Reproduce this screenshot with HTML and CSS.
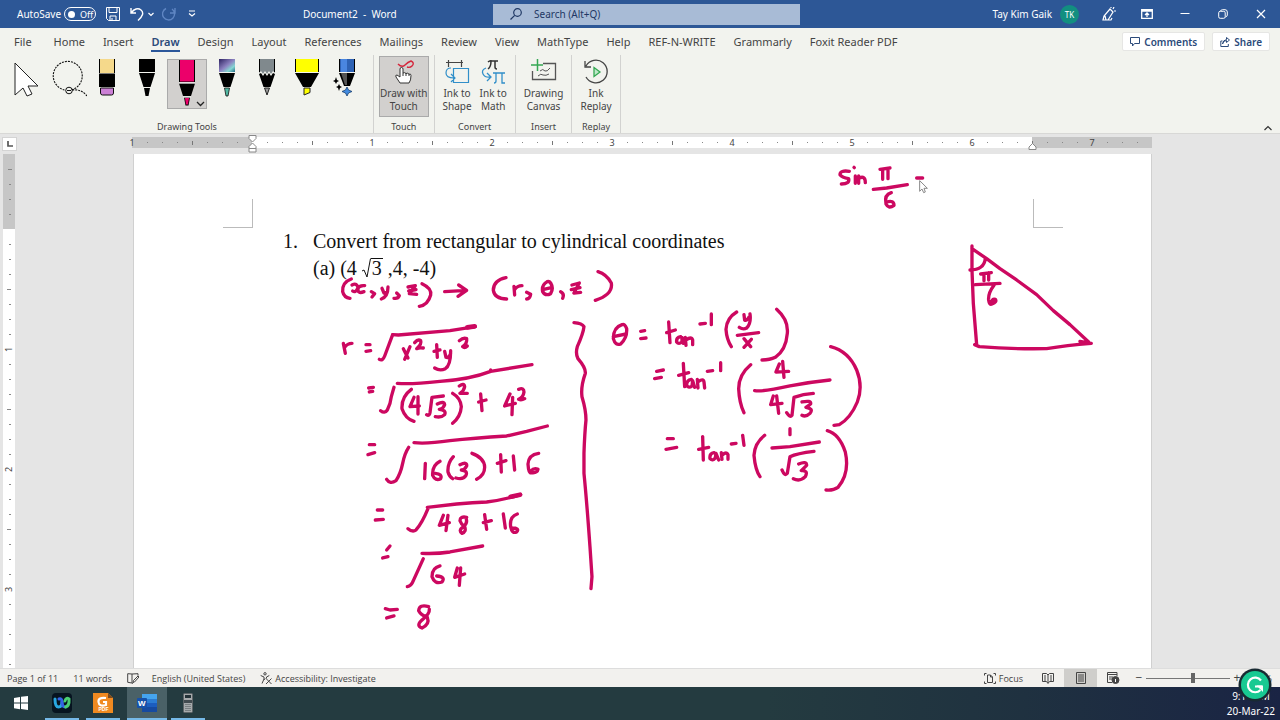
FILE: index.html
```html
<!DOCTYPE html>
<html lang="en">
<head>
<meta charset="utf-8">
<title>Document2 - Word</title>
<link rel="stylesheet" href="styles.css">
</head>
<body>
<div class="app">
  <header class="titlebar">
    <div class="quick">
      <label class="autosave" for="autosave">AutoSave</label>
      <span class="toggle"><input type="checkbox" id="autosave"><i></i><span>Off</span></span>
      <button class="tb save" aria-label="Save"><svg width="14" height="14" viewBox="0 0 14 14"><path d="M.5.5h13v13H2.500L.5 11.500zM3 .5v5h8v-5M4 13.500v-4.500h6v4.500M6 11v2"/></svg></button>
      <button class="tb undo" aria-label="Undo"><svg width="14" height="14" viewBox="0 0 14 14"><path d="M1 1v5h5M1.500 5.500C4 2 8 .5 11 3s2 6-3 10.500" stroke-width="1.400"/></svg></button>
      <button class="tb drop" aria-label="Undo list"><svg width="6" height="5" viewBox="0 0 6 5"><path d="M.5 1L3 3.500 5.500 1" stroke-width="1.200"/></svg></button>
      <button class="tb redo" aria-label="Redo"><svg width="14" height="14" viewBox="0 0 14 14"><path d="M13 1v5H8M10 2a6 6 0 1 1-6-.5" stroke="#5f86c3" stroke-width="1.400"/></svg></button>
      <button class="tb more" aria-label="Customize toolbar"><svg width="8" height="8" viewBox="0 0 8 8"><path d="M1 1h6M1 3.500L4 6l3-2.500" stroke-width="1.200"/></svg></button>
    </div>
    <div class="doc-title">Document2&nbsp; - &nbsp;Word</div>
    <div class="search">
      <svg width="12" height="12" viewBox="0 0 12 12"><circle cx="7.500" cy="4.500" r="3.800"/><path d="M4.700 7.300L.5 11.500"/></svg>
      <input type="text" aria-label="Search" placeholder="Search (Alt+Q)">
    </div>
    <div class="account"><span>Tay Kim Gaik</span><span class="avatar">TK</span></div>
    <div class="window-buttons">
      <button class="tb" aria-label="Coming soon"><svg width="14" height="14" viewBox="0 0 14 14"><path d="M1 13L2 9l6-7 3 3-5 8zM4 13l-1-4M8 2l3 3M9 1V0M11 2l1-2M12 4h2M6 13h3l1-2" stroke-width="1.200"/></svg></button>
      <button class="tb" aria-label="Ribbon display options"><svg width="12" height="10" viewBox="0 0 12 10"><path d="M.7.7h10.600v8.600H.7zM.7 2h10.600M6 8V4M4 6l2-2 2 2" stroke-width="1.300"/></svg></button>
      <button class="tb" aria-label="Minimize"><svg width="10" height="10" viewBox="0 0 10 10"><path d="M.5 4.500h9"/></svg></button>
      <button class="tb" aria-label="Restore"><svg width="10" height="10" viewBox="0 0 10 10"><rect x=".7" y="2.300" width="6.500" height="7" rx="1.500"/><path d="M2.500 2Q3 .7 4.500.7h2.500Q9.300.7 9.300 3v3Q9.300 7.500 7.500 8"/></svg></button>
      <button class="tb" aria-label="Close"><svg width="10" height="10" viewBox="0 0 10 10"><path d="M1 1l8 8M9 1L1 9" stroke-width="1.200"/></svg></button>
    </div>
  </header>

  <div class="tabrow">
    <nav class="tabs">
      <a href="#" class="file">File</a><a href="#">Home</a><a href="#">Insert</a><a href="#" class="current">Draw</a><a href="#">Design</a><a href="#">Layout</a><a href="#">References</a><a href="#">Mailings</a><a href="#">Review</a><a href="#">View</a><a href="#">MathType</a><a href="#">Help</a><a href="#">REF-N-WRITE</a><a href="#">Grammarly</a><a href="#">Foxit Reader PDF</a>
    </nav>
    <div class="tab-actions">
      <button><svg width="10" height="10" viewBox="0 0 10 10"><path d="M.5.5h9v6h-5L2.500 9V6.500h-2z"/></svg>Comments</button>
      <button><svg width="10" height="10" viewBox="0 0 10 10"><path d="M2.500 4H.8v5.500h7.500V7M2.500 7Q3 3.500 6.500 3.500V5.500L9.500 3 6.500.5v2Q3 3 2.500 7"/></svg>Share</button>
    </div>
  </div>

  <section class="ribbon">
    <div class="group tools">
      <div class="items">
        <button class="tool" aria-label="Select"><svg viewBox="0 0 40 50"><path d="M8 4v32l8-7 4 8 5-2-4-8h10z" fill="#fff" stroke="#222"/></svg></button>
        <button class="tool" aria-label="Lasso select"><svg viewBox="0 0 40 50"><path d="M17.500 31A14.500 14.500 0 1 1 24 31M25 31q10-1 15 6" fill="none" stroke="#111" stroke-width="1.100" stroke-dasharray="2 1"/><circle cx="22" cy="31.500" r="3.300" fill="none" stroke="#111"/><path d="M20 31.500h4" stroke="#111"/></svg></button>
        <button class="tool" aria-label="Eraser"><svg viewBox="0 0 40 50"><path d="M12.500 0h15v14h-15z" fill="#f5d98b"/><path d="M12 14.500h16V28H12zM12 0h1v14h-1zM27 0h1v14h-1z"/><path d="M13.500 29h13v5q0 2-2 2h-9q-2 0-2-2z" fill="#cc80d6" stroke="#111"/></svg></button>
        <button class="tool" aria-label="Black pen"><svg viewBox="0 0 40 50"><path d="M12 0h16v13H12zM12 14h16l-4.500 14h-7zM17 29h6l-1.500 8h-3z"/></svg></button>
        <button class="tool selected" aria-label="Pink pen"><svg viewBox="0 0 40 50"><path d="M12 0h16v23H12zM12 24.500h16L24 37h-8zM17 38.500h6l-1.500 8h-3z"/><path d="M13 0h14v22.500H13zM18 39h4l-1 6.500h-2z" fill="#ec006a"/><path d="M12 24h16M16 38h8" stroke="#fff" stroke-width=".7"/><path d="M30 43l3.500 3.500L37 43" fill="none" stroke="#222" stroke-width="1.300"/></svg></button>
        <button class="tool" aria-label="Galaxy pen"><svg viewBox="0 0 40 50"><defs><linearGradient id="galaxy" x2="1" y2="1"><stop stop-color="#2d2261"/><stop offset=".5" stop-color="#8d83c1"/><stop offset=".75" stop-color="#86d8d2"/><stop offset="1" stop-color="#246c87"/></linearGradient></defs><path d="M12 0h16v13H12z" fill="url(#galaxy)"/><path d="M12 14h16l-4.500 14h-7z"/><path d="M17.500 29h5l-1.500 8h-2z" fill="#52b9a3" stroke="#111" stroke-width=".8"/></svg></button>
        <button class="tool" aria-label="Pencil"><svg viewBox="0 0 40 50"><path d="M12 0h16v14l-2-2-2 3-2-3-2 3-2-3-2 3-2-3-2 2z" fill="#80898d"/><path d="M12 15l2-1 2 3 2-3 2 3 2-3 2 3 2-3 2 1-4.500 13h-7zM12 0h1v13h-1zM27 0h1v13h-1z"/><path d="M17.500 29h5L20 36z" fill="#999" stroke="#222"/></svg></button>
        <button class="tool" aria-label="Highlighter"><svg viewBox="0 0 40 50"><path d="M8 0h24v13H8z" fill="#ff0"/><path d="M8 0h1v13H8zM31 0h1v13h-1zM8 14h24l-8 14h-8z"/><path d="M17 29h6v4.500L17 36z" fill="#ff0" stroke="#222"/></svg></button>
        <button class="tool" aria-label="Action pen"><svg viewBox="0 0 40 50"><path d="M12 0h16v13H12z" fill="#2e62b4"/><path d="M14 0h6v13h-6z" fill="#4a86e0"/><path d="M12 0h1v13h-1zM27 0h1v13h-1zM12 14h16l-5 13h-6zM9 18l1 3 2 1-2 1-1 2-1-2-2-1 2-1zM12 25l1 2 2 1-2 1-1 3-1-3-2-1 2-1z"/><path d="M14 14h6v12h-2z" fill="#555"/><path d="M20 28l1.500 3L25 32.500 21.500 34 20 37l-1.500-3-3.500-1.500 3.500-1.500z" fill="#428be0" stroke="#173d70" stroke-width=".8"/></svg></button>
      </div>
      <div class="caption">Drawing Tools</div>
    </div>
    <div class="group touch">
      <div class="items"><button class="big pressed"><svg width="24" height="26" viewBox="0 0 24 26"><path d="M6 5q4 4 7 1t6-4q4 2 1 5-2 2-5 1" fill="none" stroke="#d4263c" stroke-width="1.400"/><path d="M8 24l-4-6q-1-2 1-2l3 2V10q0-1.500 1.500-1.500T11 10v4q2-1 3 .5 2-1 3 .7 2-.7 2 1.300 0 5-2 7.500z" fill="#fff" stroke="#333"/><path d="M11 14v3M14 14v3M17 15v2" stroke="#333"/></svg><span>Draw with<br>Touch</span></button></div>
      <div class="caption">Touch</div>
    </div>
    <div class="group">
      <div class="items"><button class="big"><svg width="26" height="26" viewBox="0 0 26 26" fill="none"><path d="M2 3.500h17M4.500 1v7M17.500 1v7" stroke="#444" stroke-width="1.200"/><path d="M9.500 9.500h15v14h-15zM7 9q-5 0-5 5t8 5M7 15l4 4-4 4" stroke="#318fc9" stroke-width="1.200"/></svg><span>Ink to<br>Shape</span></button><button class="big"><svg width="26" height="26" viewBox="0 0 26 26" fill="none"><path d="M8 3q2-2 4-1h6M11 2q0 6-3 8M15 2v6q0 2 2 2" stroke="#333" stroke-width="1.500"/><path d="M13 14h12M16 14v8q0 2-2 2M22 14v10h3M6 9q-5 2-3 6t8 3M7 14l4 4-4 4" stroke="#318fc9" stroke-width="1.300"/></svg><span>Ink to<br>Math</span></button></div>
      <div class="caption">Convert</div>
    </div>
    <div class="group">
      <div class="items"><button class="big"><svg width="26" height="26" viewBox="0 0 26 26" fill="none"><path d="M12 4.500h12.500v16h-23V12" stroke="#555" stroke-width="1.300"/><path d="M9 12q3-3 5 0 2 1 5-3M7 17q3-3 5-1 3 1 6-1" stroke="#555"/><path d="M6.500 0v12M0 6h12" stroke="#35a853" stroke-width="1.500"/></svg><span>Drawing<br>Canvas</span></button></div>
      <div class="caption">Insert</div>
    </div>
    <div class="group">
      <div class="items"><button class="big"><svg width="26" height="26" viewBox="0 0 26 26" fill="none"><path d="M3 7A11.300 11.300 0 1 1 3 18M2 2v6h6" stroke="#444" stroke-width="1.300"/><path d="M11 8.500l6 4.500-6 4.500z" fill="#bfe8c9" stroke="#35a853" stroke-width="1.300"/></svg><span>Ink<br>Replay</span></button></div>
      <div class="caption">Replay</div>
    </div>
    <button class="collapse" aria-label="Collapse the ribbon"><svg width="8" height="6" viewBox="0 0 8 6"><path d="M.5 5L4 1.500 7.500 5" fill="none" stroke="#333" stroke-width="1.200"/></svg></button>
  </section>

  <div class="ruler-row">
    <button class="tabstop" aria-label="Left tab"><svg width="6" height="6" viewBox="0 0 6 6"><path d="M1 0v5h5" fill="none" stroke="#555" stroke-width="1.700"/></svg></button>
    <div class="ruler-holder">
      <div class="ruler">
        <div class="marks"><span>1</span><span></span><span>1</span><span>2</span><span>3</span><span>4</span><span>5</span><span>6</span><span>7</span></div>
        <svg class="indent left" width="9" height="18" viewBox="0 0 9 18"><path d="M1 .5h7v3L4.500 7 1 3.500zM4.500 8L8 11.500V17H1v-5.500zM1 13.500h7" fill="#fff" stroke="#888"/></svg>
        <svg class="indent right" width="9" height="7" viewBox="0 0 9 7"><path d="M4.500.5L8 4v2.500H1V4z" fill="#fff" stroke="#888"/></svg>
      </div>
    </div>
  </div>

  <main class="workspace">
    <div class="vruler"><div class="vmargin"></div><div class="vmarks"><span>1</span><span>2</span><span>3</span></div></div>
    <div class="canvas">
      <article class="page">
        <div class="corners"><i></i><i></i></div>
        <div class="question">
          <span>1.</span>
          <div><p>Convert from rectangular to cylindrical coordinates</p>
          <p>(a) (4 <span class="root"><svg width="9" height="20" viewBox="0 0 9 20"><path d="M0 13l2-1 3 7L8.500.5" fill="none" stroke="#111"/></svg><span>3</span></span> ,4, -4)</p></div>
        </div>
        <svg class="ink" viewBox="133 154 1019 514" role="img" aria-label="Handwritten working in pink ink">
          <g transform="translate(270 225) scale(.3333)">
            <path d="M244 162Q216 172 218 200 222 218 240 220M246 180Q262 172 264 190 262 208 282 200M284 182Q268 180 262 192 256 204 248 198M304 200L314 206 306 216M336 190L342 204 352 202M354 186Q354 215 334 222M380 204L388 212Q384 222 372 220M414 186L436 182 418 206 440 208M416 198L438 194M456 176Q486 190 482 210 474 240 448 244"/>
            <path d="M524 200L590 196M566 180L590 196 564 214"/>
            <path d="M708 158Q670 166 670 196 674 222 710 222M732 184L734 210M734 194Q742 182 756 182M770 202L782 208Q780 222 770 222M832 170Q814 180 818 200 826 214 842 206 852 190 842 174 838 168 832 170M818 194L844 188M872 200Q884 206 878 220M906 180L928 174 912 204 932 202M904 194L930 188M984 140Q1010 148 1024 174 1030 208 976 226"/>
          </g>
          <g transform="translate(330 300) scale(.3333)">
            <path d="M40 130L46 160M44 142Q52 130 66 130M108 134H120M108 154L122 152M148 178Q158 184 164 168L188 104M220 146L234 174M240 140L224 178M254 128Q264 116 272 122 276 132 260 146 268 142 280 144M320 134L322 172M312 154L330 150M344 154L348 172Q356 176 362 160M362 152Q362 196 346 206 330 214 314 204M388 122Q400 112 410 116 412 130 398 140 404 146 412 138"/>
            <path d="M188 104L205 105 360 92 436 80"/><path class="heavy" d="M412 82L434 79"/>
            <path d="M116 264L130 262M118 276L128 274M152 332Q164 342 172 330 182 310 184 290L192 262M202 250Q240 254 330 244 420 238 482 214L606 194M482 210V214"/>
            <path d="M244 268Q214 290 216 326 226 356 252 364M252 292L240 320 268 318M264 290V342M290 344Q298 350 300 338L306 292 340 288M322 312Q342 302 344 314 340 326 328 328 350 330 344 344 334 354 316 350M368 280Q392 294 394 320 392 350 368 370M388 258Q402 248 404 260 402 272 390 280L412 280M452 282L456 332M446 306L468 300M540 282L524 318 556 310M548 292L546 344M566 268Q582 262 582 276 580 292 566 298 574 302 584 296"/>
            <path d="M732 68Q756 70 762 80 760 100 742 140 736 160 744 176 768 204 766 220 752 260 756 290 768 330 768 360 764 400 762 460L762 520Q770 600 780 740L786 830 783 866"/>
          </g>
          <g transform="translate(340 410) scale(.3333)">
            <path d="M88 104H104M84 134L104 128M140 208Q150 224 168 212 182 190 188 160 194 130 206 112M222 98Q260 102 330 92 400 84 500 78L560 64 622 48"/>
            <path d="M256 160L254 206M300 154Q276 166 278 196 286 214 302 206 308 192 286 190M340 140Q322 160 324 186 328 200 338 206M360 164Q382 154 380 168 374 180 364 180 384 182 378 196 370 210 348 204M396 130Q434 144 434 172 434 196 410 208M482 134L484 186M472 160L498 152M520 138L524 180M596 130Q566 134 564 162 566 192 574 188 592 190 594 178 582 172 572 184"/>
            <path d="M112 300H128M106 330L130 328M204 356Q218 368 228 360 246 340 264 296M262 292L350 282Q400 278 440 276 490 270 542 254M310 316L298 346 328 338M324 316L318 362M380 322Q360 318 360 332 364 344 374 350 380 366 366 370 354 362 370 350 384 340 378 324M434 314L440 358M430 338L454 332M490 312L496 354M532 312Q508 320 512 350 516 372 530 366 540 354 516 354"/><path class="heavy" d="M512 260L540 254"/>
            <path d="M140 420L150 408M128 444L144 440M202 530Q214 528 220 512L250 446M246 430Q290 432 330 426L428 408M300 468Q276 474 276 500 284 524 306 516 318 500 290 498M352 474L344 502 374 492M362 474L358 526"/>
            <path d="M136 596L150 600 172 598M140 624L162 618M266 590Q238 582 236 602 242 614 262 622 270 642 246 654 228 648 244 632 270 612 268 598"/>
          </g>
          <g transform="translate(590 290) scale(.3333)">
            <path d="M96 104Q70 112 70 146 76 168 92 162 112 144 110 116 104 100 96 104M70 140L108 132M152 124L164 122M152 146L168 144M236 96L240 158M230 128L256 120M272 140Q258 142 260 156 266 164 276 156V142L280 160M286 142L288 166M288 150Q304 138 308 150V164M330 102L346 100M364 72V104M440 66Q410 84 408 118 410 148 424 170M462 74L464 90Q470 94 478 80M480 72Q484 100 470 114 460 120 448 112M442 136L506 128M462 146L482 170M484 148L462 172M560 58Q596 90 592 130 588 180 556 202 540 210 516 210"/>
            <path d="M200 244L220 240M194 266L214 262M280 220L284 290M266 256L296 248M304 268Q290 270 290 286 296 296 306 288L308 272 314 292M322 268L324 294M326 274Q340 264 342 276L344 294M352 244L368 242M392 218V242M482 224Q446 254 446 296 448 340 462 368M568 222L558 246 596 244M578 214L582 262M494 302Q520 306 600 288 660 276 720 270M550 318L542 344 576 340M560 318L566 370M590 368Q600 384 606 376L612 322Q640 312 670 310M636 336Q664 330 662 342L648 352Q672 356 660 370 648 382 636 376M722 170Q776 184 800 240 820 290 802 336 782 384 748 404L732 406"/>
            <path d="M232 446H250M228 478L260 472M338 440L340 510M326 478L356 472M372 488Q358 490 360 506 368 514 376 504L378 490 386 510M394 488L396 508M398 494Q410 484 414 494V508M424 462L438 460M458 436L462 466M524 436Q494 460 492 496 496 540 510 560M600 416V434M546 474L600 470 688 456M576 540Q584 560 592 550L600 500Q620 490 672 484M626 522Q650 512 650 526L634 542Q656 540 646 560 630 576 610 566M712 422Q748 432 766 486 780 550 744 592 730 602 708 600"/>
          </g>
          <g transform="translate(800 130) scale(.3333)">
            <path d="M148 124Q120 120 120 134 126 142 146 146 150 162 124 162M166 138V160M162 112L163 113M176 138V160M178 144Q196 136 196 158M240 118L270 114M248 120V148M264 118V146M220 178L260 174 322 164M274 188Q252 194 258 222 266 238 282 226 282 210 260 216M350 144H368"/>
            <path d="M516 348V420L520 520 530 644M524 644L538 650Q640 658 740 656 800 646 874 640L840 634M516 356L560 386 600 416 650 450 710 494 760 542 810 584 866 636M556 386Q552 420 510 420M542 432L574 428M552 432V452M566 428V450M526 464L600 460M582 466Q564 490 566 510 568 526 576 522 592 516 586 508 576 504 572 522"/>
            <path class="pointer" d="M359 153V184L366 177 371 188 376 186 372 175H381z"/>
          </g>
        </svg>
      </article>
    </div>
  </main>

  <footer class="status">
    <span>Page 1 of 11</span><span>11 words</span>
    <button class="sb" aria-label="Proofing"><svg width="12" height="11" viewBox="0 0 12 11"><path d="M5 1L.7.7v8.600L5 10zM5 1L11 .7v2M5 10l1 .5M6.500 7.500L11 3l1 1-4.500 5-1.500.5z"/></svg></button>
    <span class="lang">English (United States)</span>
    <button class="sb access"><svg width="12" height="12" viewBox="0 0 12 12"><circle cx="5" cy="1.800" r="1.200"/><path d="M.7 3.500L4 5v2l-2 4.500M9.300 3.500L6.500 5v1.500M4 8l1-1.500M6 6.500L11.500 12M11.500 6.500L6 12"/></svg>Accessibility: Investigate</button>
    <div class="views">
      <button class="sb focus"><svg width="12" height="11" viewBox="0 0 12 11"><path d="M2.500.5H.5v2M.5 8.500v2h2M9.500.5h2v2M11.500 8.500v2h-2M3.500 2h3l2 2v5.500h-5zM6.500 2v2h2"/></svg>Focus</button>
      <button class="sb view" aria-label="Read mode"><svg width="12" height="11" viewBox="0 0 12 11"><path d="M.5.5h4L6 2l1.500-1.500h4v8h-4L6 10.500l-1.500-2h-4zM6 2v8M2 3h2M2 5h2M2 7h2M8 3h2M8 5h2M8 7h2"/></svg></button>
      <button class="sb view on" aria-label="Print layout"><svg width="10" height="12" viewBox="0 0 10 12"><path d="M.5.5h9v11h-9zM2 3h6M2 5h6M2 7h6M2 9h6"/></svg></button>
      <button class="sb view" aria-label="Web layout"><svg width="13" height="12" viewBox="0 0 13 12"><path d="M10 4V.5H.5v10H5M.5 2.500H10M2 5h4M2 7h3"/><circle cx="8.500" cy="8" r="3.500" fill="#444"/><path d="M8.500 7v3" stroke="#fff"/></svg></button>
      <button class="sb step" aria-label="Zoom out">−</button>
      <input class="zoom" type="range" min="0" max="100" value="56" aria-label="Zoom">
      <button class="sb step" aria-label="Zoom in">+</button>
      <span class="percent">100%</span>
    </div>
  </footer>

  <nav class="taskbar">
    <button class="task plain" aria-label="Start"><svg width="14" height="14" viewBox="0 0 14 14"><path d="M0 2l6-1v5.600H0zM7 .8L14 0v6.600H7zM0 7.500h6v5.700l-6-1zM7 7.500h7V14l-7-.9z" fill="#fff"/></svg></button>
    <button class="task" aria-label="Webex"><svg width="20" height="20" viewBox="0 0 20 20"><rect width="20" height="20" rx="4" fill="#071420"/><g fill="none" stroke-width="3" stroke-linecap="round"><path d="M3 6q0 8 3.500 8T10 9" stroke="#28a7e0"/><path d="M7 6q3-1 3 3 0 5 3.500 5" stroke="#3464e5"/><path d="M13.500 14q4-1 3.500-8-3-2-4 2" stroke="#4bd173"/></g></svg></button>
    <button class="task" aria-label="Foxit PDF"><svg width="20" height="20" viewBox="0 0 20 20"><path d="M0 0h15l5 5v15H0z" fill="#f08a21"/><path d="M15 0v5h5z" fill="#7a4b20"/><path d="M13 5Q5 4 5.500 9T13 12V9h-3" fill="none" stroke="#fff" stroke-width="2.200"/><text x="5.500" y="18" class="pdf">PDF</text></svg></button>
    <button class="task active" aria-label="Word"><svg width="20" height="18" viewBox="0 0 20 18"><path d="M5 0h15v18H5z" fill="#1c5dbe"/><path d="M5 0h15v5H5z" fill="#45a4ee"/><path d="M5 5h15v4H5z" fill="#2b7cd3"/><path d="M5 13h15v5H5z" fill="#164aa0"/><rect y="4" width="10" height="10" rx="1" fill="#1651a9"/><text x="1" y="12" class="w">W</text></svg></button>
    <button class="task" aria-label="Calculator"><svg width="10" height="20" viewBox="0 0 10 20"><rect x=".5" y=".5" width="9" height="19" rx="1" fill="#a6aaac" stroke="#5e6568"/><path d="M2 2h6v3H2z" fill="#243238"/><path d="M1 7h8v3H1z" fill="#424b50"/><path d="M3 11v8M5 11v8M7 11v8" stroke="#4b5357" stroke-dasharray="1 1"/></svg></button>
    <div class="clock"><span>9:11 PM</span><span>20-Mar-22</span></div>
  </nav>
  <button class="grammarly" aria-label="Grammarly"><svg width="34" height="34" viewBox="0 0 34 34"><circle cx="17" cy="17" r="16.500" fill="#182a32"/><circle cx="17" cy="17" r="14" fill="#18c992"/><path d="M23 12.500A7.300 7.300 0 1 0 22.500 22M17 18.500h7" fill="none" stroke="#fff" stroke-width="2.200"/><path d="M18.500 17.500H25V24z" fill="#fff"/></svg></button>
</div>
</body>
</html>
```
FILE: styles.css
```css
* { box-sizing: border-box; }
body { margin: 0; font-family: "Noto Sans", "Open Sans", sans-serif; font-size: 11px; color: #444; }
button { font: inherit; color: inherit; border: 0; background: none; padding: 0; margin: 0; }
p { margin: 0; }
a { color: inherit; text-decoration: none; }
svg { display: block; flex: none; }
.app { position: relative; height: 100vh; display: flex; flex-direction: column; overflow: hidden; background: #e5e5e5; }

.titlebar { flex: none; height: 28px; background: #2d5796; color: #fff; display: flex; align-items: center; font-size: 11px; white-space: nowrap; }
.tb { display: flex; align-items: center; justify-content: center; }
.tb svg { fill: none; stroke: #fff; }
.quick { width: 303px; padding-left: 17px; display: flex; align-items: center; font-size: 10px; }
.autosave { width: 47px; }
.toggle { position: relative; width: 32px; height: 14px; border: 1px solid #fff; border-radius: 7px; display: flex; align-items: center; padding-left: 3px; font-size: 9px; gap: 5px; }
.toggle i { width: 7px; height: 7px; border-radius: 50%; background: #fff; }
.toggle input { position: absolute; inset: 0; width: 100%; height: 100%; margin: 0; opacity: 0; }
.save { margin-left: 10px; }
.undo { margin-left: 10px; }
.drop { margin-left: 4px; }
.redo { margin-left: 8px; }
.more { margin-left: 12px; }
.doc-title { width: 190px; font-size: 10px; }
.search { flex: 0 1 307px; height: 21px; background: #a8bbd6; display: flex; align-items: center; padding-left: 17px; gap: 12px; }
.search svg { fill: none; stroke: #1f3864; stroke-width: 1.2; }
.search input { flex: 1; min-width: 0; border: 0; padding: 0; background: none; font: inherit; font-size: 10px; color: #1f3864; }
.search input::placeholder { color: #1f3864; opacity: 1; }
.account { margin-left: auto; display: flex; align-items: center; gap: 8px; font-size: 10px; }
.avatar { width: 19px; height: 19px; border-radius: 50%; background: #128f80; font-size: 8px; display: flex; align-items: center; justify-content: center; }
.window-buttons { display: flex; margin-left: 11px; }
.window-buttons .tb { width: 38px; height: 28px; }

.tabrow { flex: none; height: 27px; background: #f2f3ee; display: flex; justify-content: space-between; padding: 0 10px 0 14px; white-space: nowrap; }
.tabs { display: flex; gap: 18px; padding-top: 4px; line-height: 19px; }
.tabs .file { margin-right: 4px; }
.tabs .current { font-weight: 600; color: #2b4a7a; height: 20px; border-bottom: 2px solid #2b579a; }
.tab-actions { display: flex; gap: 7px; padding-top: 4px; }
.tab-actions button { height: 19px; background: #fff; color: #2b4a7a; font-weight: 600; font-size: 10px; padding: 0 7px; border-radius: 2px; display: flex; align-items: center; gap: 4px; border: 1px solid #e6e6e4; }
.tab-actions svg { fill: none; stroke: #2b4a7a; }

.ribbon { flex: none; height: 79px; background: #f2f3ee; border-bottom: 1px solid #d8d8d6; display: flex; }
.group { display: flex; flex-direction: column; justify-content: space-between; align-items: center; padding: 1px 7px 0; border-right: 1px solid #d2d2d0; }
.touch { padding: 1px 5px 0; }
.items { display: flex; gap: 6px; }
.tools { padding: 1px 6px 0 7px; }
.tools .items { gap: 0; padding-top: 3px; }
.tool { width: 40px; height: 50px; }
.tool svg { width: 40px; height: 50px; }
.selected { background: #d2d0ce; outline: 1px solid #aaa; outline-offset: -1px; }
.caption { font-size: 9px; line-height: 12px; }
.big { height: 61px; padding: 3px 1px 0; display: flex; flex-direction: column; align-items: center; gap: 2px; font-size: 10px; line-height: 13px; white-space: nowrap; }
.pressed { background: #d2d0ce; outline: 1px solid #aaa; outline-offset: -1px; }
.collapse { margin-left: auto; align-self: flex-end; padding: 0 8px 2px 0; }

.ruler-row { flex: none; height: 20px; display: flex; align-items: flex-start; }
.tabstop { width: 15px; height: 14px; margin-top: 3px; margin-left: 2px; border: 1px solid #d4d4d4; background: #fff; display: flex; align-items: center; justify-content: center; }
.ruler-holder { flex: 1; display: flex; justify-content: center; padding: 3px 13px 0 0; }
.ruler { position: relative; width: 1020px; height: 11px; background: linear-gradient(90deg, #c6c6c6 120px, #fff 120px, #fff 900px, #c6c6c6 900px); }
.marks { display: flex; margin-left: -60px; }
.marks span { flex: 0 0 120px; height: 11px; font-size: 9px; line-height: 11px; text-align: center;
  background:
    linear-gradient(#777, #777) 0 4px / 1px 4px no-repeat,
    linear-gradient(#888, #888) 15px 5px / 1px 1px no-repeat,
    linear-gradient(#888, #888) 30px 5px / 1px 1px no-repeat,
    linear-gradient(#888, #888) 45px 5px / 1px 1px no-repeat,
    linear-gradient(#888, #888) 75px 5px / 1px 1px no-repeat,
    linear-gradient(#888, #888) 90px 5px / 1px 1px no-repeat,
    linear-gradient(#888, #888) 105px 5px / 1px 1px no-repeat; }
.marks span:first-child { background-position: 200px 0, 200px 0, 200px 0, 200px 0, 75px 5px, 90px 5px, 105px 5px; }
.indent { position: absolute; }
.indent.left { left: 116px; top: -2px; }
.indent.right { left: 896px; top: 6px; }

.workspace { flex: 1; min-height: 0; display: flex; }
.vruler { width: 12px; margin-left: 3px; background: #fff; display: flex; flex-direction: column; overflow: hidden; }
.vmargin { flex: none; height: 75px; background: #c6c6c6 linear-gradient(#888, #888) 5px 15px / 4px 1px no-repeat; }
.vmargin, .vmarks { position: relative; }
.vmargin::after { content: ""; position: absolute; left: 6px; top: 30px; width: 2px; height: 31px; background: repeating-linear-gradient(#888 0 1px, transparent 1px 15px); }
.vmarks { padding-top: 60px; background: #fff; }
.vmarks::before { content: ""; position: absolute; left: 6px; top: 15px; width: 2px; height: 450px; background: repeating-linear-gradient(#888 0 1px, transparent 1px 15px); }
.vmarks span { position: relative; height: 120px; writing-mode: vertical-rl; transform: rotate(180deg); display: flex; align-items: center; justify-content: center; width: 12px; font-size: 9px; line-height: 12px; background: linear-gradient(#888, #888) 4px 119px / 4px 1px no-repeat, linear-gradient(#fff, #fff) 0 55px / 12px 10px no-repeat; }
.canvas { flex: 1; display: flex; justify-content: center; padding-right: 10px; }
.page { position: relative; width: 1019px; background: #fff; border-left: 1px solid #d0d0d0; border-right: 1px solid #d0d0d0; color: #111; font-family: "Liberation Serif", serif; font-size: 20px; }
.corners { display: flex; justify-content: space-between; padding: 45px 88px 0 89px; }
.corners i { width: 30px; height: 29px; border: solid #bbb; border-width: 0 1px 1px 0; }
.corners i + i { border-width: 0 0 1px 1px; }
.question { display: flex; padding-left: 149px; line-height: 27px; white-space: nowrap; }
.question > span { width: 30px; }
.root { display: inline-block; line-height: 18px; }
.root svg { display: inline-block; vertical-align: -3px; }
.root > span { display: inline-block; border-top: 1px solid #111; padding: 0 1px; }
.ink { position: absolute; inset: 0 auto auto -1px; width: 1019px; height: 514px; fill: none; stroke: #cc0860; stroke-width: 10; stroke-linecap: round; stroke-linejoin: round; overflow: visible; }
.ink .heavy { stroke-width: 14; }
.ink .pointer { fill: #fff; stroke: #888; stroke-width: 3; }

.status { flex: none; height: 19px; background: #f2f1ee; border-top: 1px solid #ddd; display: flex; align-items: center; padding-left: 7px; font-family: "Open Sans", "Noto Sans", sans-serif; font-size: 9px; white-space: nowrap; gap: 15px; }
.sb { display: flex; align-items: center; gap: 3px; }
.sb svg { fill: none; stroke: #444; }
.lang { margin-left: -2px; }
.views { margin-left: auto; display: flex; align-items: center; }
.focus { margin-right: 8px; }
.view { width: 33px; height: 18px; justify-content: center; }
.view.on { background: #cfcecb; }
.step { width: 14px; justify-content: center; font-size: 12px; line-height: 16px; }
.view + .step { margin-left: 2px; }
.zoom { appearance: none; width: 84px; height: 12px; margin: 0; background: linear-gradient(#777, #777) 0 6px / 100% 1px no-repeat; }
.zoom::-webkit-slider-thumb { appearance: none; width: 4px; height: 10px; background: #666; }
.percent { width: 36px; padding-right: 8px; text-align: right; }

.taskbar { flex: none; height: 33px; background: linear-gradient(90deg, #243b40 60%, #1f3140 80%, #1a2444); display: flex; padding-left: 4px; gap: 7px; }
.task { width: 34px; display: flex; align-items: center; justify-content: center; border-bottom: 2px solid #76b9e8; }
.task.plain { border-color: transparent; }
.task.active { width: 40px; background: #4a6167; }
.task.active + .task { margin-left: -3px; }
.pdf { font: 700 5px "Liberation Sans", sans-serif; fill: #fff; }
.w { font: 700 8px "Liberation Sans", sans-serif; fill: #fff; }
.clock { margin-left: auto; padding-right: 5px; display: flex; flex-direction: column; align-items: center; justify-content: center; color: #fff; font-size: 10px; line-height: 15px; }
.grammarly { position: absolute; right: 8px; bottom: 18px; }
```
